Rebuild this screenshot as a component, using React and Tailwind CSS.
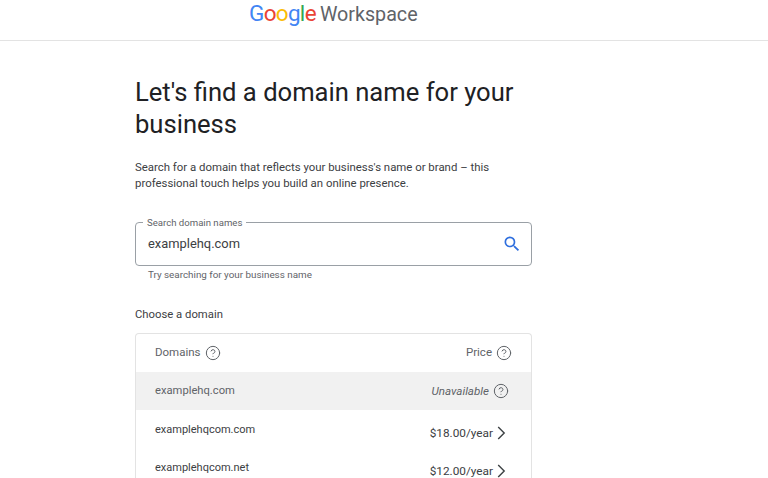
import React from "react";
import { CircleHelp } from "lucide-react";

const domains = [
  { name: "examplehqcom.com", price: "$18.00/year" },
  { name: "examplehqcom.net", price: "$12.00/year" },
];

const App = () => {
  return (
    <div className="h-[478px] w-[768px] overflow-hidden bg-white font-['Roboto',sans-serif] text-[#3c4043]">
      <header className="flex h-[41px] items-start border-b border-[#e3e3e3] pl-[249px]">
        <div className="flex items-baseline leading-[27px]">
          <span className="text-[22.5px] tracking-[-0.7px]">
            <span className="text-[#4285f4]">G</span>
            <span className="text-[#ea4335]">o</span>
            <span className="text-[#fbbc05]">o</span>
            <span className="text-[#4285f4]">g</span>
            <span className="text-[#34a853]">l</span>
            <span className="text-[#ea4335]">e</span>
          </span>
          <span className="ml-[4px] text-[19.7px] text-[#5f6368]">Workspace</span>
        </div>
      </header>

      <main className="ml-[135px] w-[397px]">
        <h1 className="mt-[35px] text-[25.6px] leading-[32px] text-[#202124]">
          Let's find a domain name for your business
        </h1>
        <p className="mt-[19px] text-[11.4px] leading-[16px] text-[#3c4043]">
          Search for a domain that reflects your business's name or brand – this professional touch helps you build an online presence.
        </p>

        <div className="relative mt-[31px] flex h-[44px] items-center justify-between rounded-[4px] border border-[#9aa0a6] pl-3 pr-[9px]">
          <span className="absolute -top-[6px] left-[7px] bg-white px-1 text-[9.6px] leading-[12px] text-[#5f6368]">
            Search domain names
          </span>
          <span className="text-[12.9px] text-[#3c4043]">examplehq.com</span>
          <svg width="20" height="20" viewBox="0 0 24 24" fill="#2f6fde">
            <path d="M15.5 14h-.79l-.28-.27A6.471 6.471 0 0 0 16 9.5 6.5 6.5 0 1 0 9.5 16c1.61 0 3.09-.59 4.23-1.57l.27.28v.79l5 4.99L20.49 19l-4.99-5zm-6 0C7.01 14 5 11.99 5 9.5S7.01 5 9.5 5 14 7.01 14 9.5 11.99 14 9.5 14z" />
          </svg>
        </div>
        <p className="mt-[2px] pl-[13px] text-[9.85px] leading-[14px] text-[#5f6368]">
          Try searching for your business name
        </p>

        <h2 className="mt-[25px] text-[11.3px] leading-[16px] text-[#3c4043]">Choose a domain</h2>

        <div className="mt-[10px] rounded-t-[4px] border-x border-t border-[#e3e3e3]">
          <div className="flex h-[38px] items-center justify-between pl-[19px] pr-[19px] text-[11.5px] text-[#5f6368]">
            <span className="flex items-center gap-[4px]">
              Domains <CircleHelp size={16} strokeWidth={1.5} />
            </span>
            <span className="flex items-center gap-[4px]">
              Price <CircleHelp size={16} strokeWidth={1.5} />
            </span>
          </div>
          <div className="flex h-[38px] items-center justify-between bg-[#f1f1f1] pl-[19px] pr-[22px] pt-[1px] text-[11.2px] text-[#5f6368]">
            <span>examplehq.com</span>
            <span className="flex items-center gap-[4px] text-[11.6px] italic">
              Unavailable <CircleHelp size={16} strokeWidth={1.5} />
            </span>
          </div>
          {domains.map((d) => (
            <div key={d.name} className="flex h-[38px] items-start justify-between pl-[19px] pr-[25px] text-[11px] leading-[14px] text-[#3c4043]">
              <span className="pt-[13px]">{d.name}</span>
              <span className="flex items-center gap-[4px] pt-[16px] text-[11.8px]">
                {d.price}
                <svg width="9" height="14" viewBox="0 0 9 14" fill="none" stroke="#3c4043" strokeWidth="1.4">
                  <path d="M1.2 1l6 6-6 6" />
                </svg>
              </span>
            </div>
          ))}
        </div>
      </main>
    </div>
  );
};

export default App;
